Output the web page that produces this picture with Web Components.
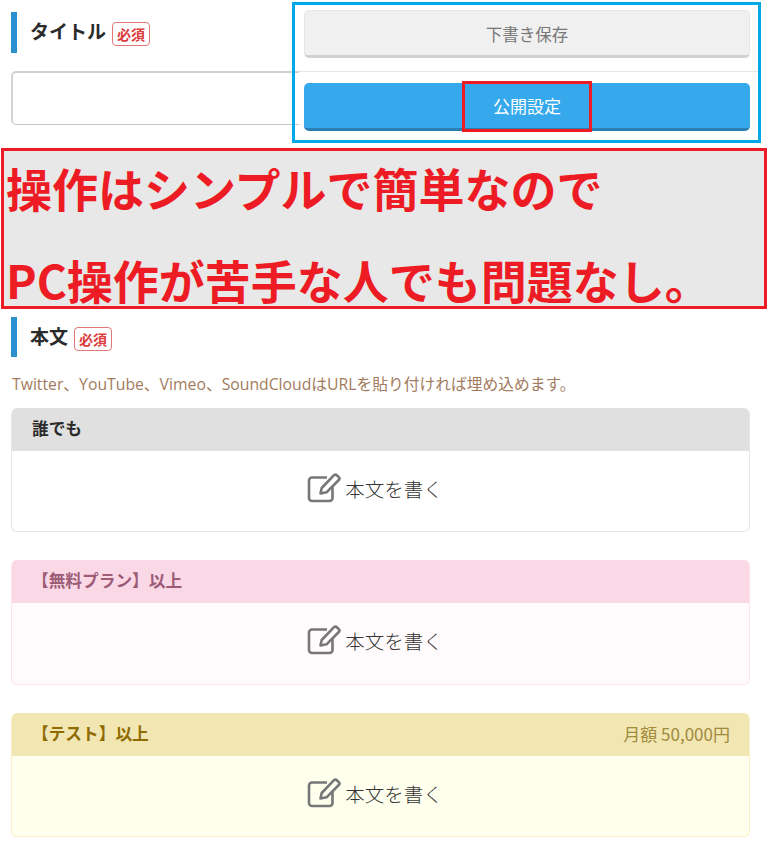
<!DOCTYPE html>
<html lang="ja">
<head>
<meta charset="utf-8">
<title>投稿</title>
<style>
  html, body { margin: 0; background: #fff; }
  body { font-family: "Noto Sans CJK JP", "Noto Sans", sans-serif; color: #333; }
</style>
</head>
<body>
<post-editor>
  <field-heading slot="title-heading" style="--top:12px;--h:41px">タイトル</field-heading>
  <field-heading slot="body-heading" style="--top:8px">本文</field-heading>
  <callout-banner slot="banner">
    <span>操作はシンプルで簡単なので</span>
    <span>PC操作が苦手な人でも問題なし。</span>
  </callout-banner>
  <plan-card slot="cards" tone="plain" label="誰でも"></plan-card>
  <plan-card slot="cards" tone="pink" label="【無料プラン】以上" style="--card-h:125px"></plan-card>
  <plan-card slot="cards" tone="gold" label="【テスト】以上" price="月額 50,000円"></plan-card>
</post-editor>

<script>
(() => {
  "use strict";

  const FONT = `"Noto Sans CJK JP", "Noto Sans", sans-serif`;

  class PostEditor extends HTMLElement {
    connectedCallback() {
      if (this.shadowRoot) return;
      const shadow = this.attachShadow({ mode: "open" });
      shadow.innerHTML = `
        <style>
          :host { display: block; position: relative; width: 768px; height: 850px; overflow: hidden; }
          .input {
            height: 54px;
            margin: 18px 18px 0 11px;
            box-sizing: border-box;
            border: 1px solid #c4c4c4;
            border-top: 2px solid #cfcfcf;
            border-left: 2px solid #d4d4d4;
            border-radius: 5px;
            background: #fff;
          }
          .banner { display: block; margin: 23px 1px 0; }
          .note {
            margin: 17px 0 14px 12px;
            font: 15.75px/20px "Open Sans", ${FONT};
            color: #a27c5e;
            white-space: nowrap;
          }
          .cards { display: flex; flex-direction: column; gap: 28px; margin: 0 18px 0 11px; }
        </style>
        <slot name="title-heading"></slot>
        <div class="input"></div>
        <div class="banner"><slot name="banner"></slot></div>
        <slot name="body-heading"></slot>
        <p class="note">Twitter、YouTube、Vimeo、SoundCloudはURLを貼り付ければ埋め込めます。</p>
        <div class="cards"><slot name="cards"></slot></div>
        <action-panel></action-panel>`;
    }
  }

  class FieldHeading extends HTMLElement {
    connectedCallback() {
      if (this.shadowRoot) return;
      const shadow = this.attachShadow({ mode: "open" });
      shadow.innerHTML = `
        <style>
          :host {
            display: flex;
            align-items: center;
            box-sizing: border-box;
            height: var(--h, 40px);
            margin: var(--top, 0) 0 0 11px;
            padding: 0 0 4px 13px;
            border-left: 6px solid #2a90cf;
            font: bold 19px/1 ${FONT};
            color: #2b2b2b;
          }
          .badge {
            display: inline-flex;
            align-items: center;
            justify-content: center;
            box-sizing: border-box;
            width: 38px;
            height: 24px;
            margin: 7px 0 0 6px;
            border: 1px solid #e27878;
            border-radius: 4px;
            font-size: 14px;
            font-weight: bold;
            color: #dc3c3c;
          }
        </style>
        <slot></slot><span class="badge">必須</span>`;
    }
  }

  class ActionPanel extends HTMLElement {
    connectedCallback() {
      if (this.shadowRoot) return;
      const shadow = this.attachShadow({ mode: "open" });
      shadow.innerHTML = `
        <style>
          :host {
            position: absolute;
            left: 292px;
            top: 2px;
            width: 469px;
            height: 141px;
            box-sizing: border-box;
            border: 3px solid #00a8e8;
            font: 16.5px/1 ${FONT};
          }
          .inner {
            box-sizing: border-box;
            height: 100%;
            margin-left: 4px;
            padding: 5px 8px 0 5px;
            background: #fff;
          }
          .btn {
            display: flex;
            align-items: center;
            justify-content: center;
            box-sizing: border-box;
            height: 48px;
            border-radius: 5px;
          }
          .draft { padding-top: 2px; background: #f0f0f0; border: 1px solid #e6e6e6; border-bottom: 3px solid #d2d2d2; color: #777; }
          .publish { position: relative; background: #36a8ec; border-bottom: 3px solid #2b7fb5; color: #fff; font-size: 17px; }
          hr { height: 1px; margin: 13px -8px 11px -5px; border: 0; background: #e6e6e6; }
          .mark {
            position: absolute;
            left: 158px;
            top: -2px;
            width: 130px;
            height: 51px;
            box-sizing: border-box;
            border: 3px solid #ed1c24;
          }
        </style>
        <div class="inner">
          <div class="btn draft">下書き保存</div>
          <hr>
          <div class="btn publish">公開設定<span class="mark"></span></div>
        </div>`;
    }
  }

  class CalloutBanner extends HTMLElement {
    connectedCallback() {
      if (this.shadowRoot) return;
      const shadow = this.attachShadow({ mode: "open" });
      shadow.innerHTML = `
        <style>
          :host {
            display: flex;
            flex-direction: column;
            gap: 46px;
            box-sizing: border-box;
            height: 161px;
            padding: 13px 0 0 2px;
            border: 3px solid #ed1c24;
            background: #e8e8e8;
            color: #ed1c24;
            font: bold 46px/46px ${FONT};
            white-space: nowrap;
          }
          ::slotted(span) { display: block; }
        </style>
        <slot></slot>`;
    }
  }

  const TONES = {
    plain: { border: "#e6e6e6", head: "#e0e0e0", body: "#fff", label: "#2b2b2b", price: "#777" },
    pink: { border: "#fce3ed", head: "#fbd8e6", body: "#fffbfd", label: "#9c5b76", price: "#9c5b76" },
    gold: { border: "#f8f0c8", head: "#f2e6b3", body: "#ffffee", label: "#8f6b00", price: "#a08a3c" },
  };

  class PlanCard extends HTMLElement {
    connectedCallback() {
      if (this.shadowRoot) return;
      const tone = TONES[this.getAttribute("tone")] || TONES.plain;
      const price = this.getAttribute("price");
      const shadow = this.attachShadow({ mode: "open" });
      shadow.innerHTML = `
        <style>
          :host {
            display: flex;
            flex-direction: column;
            box-sizing: border-box;
            height: var(--card-h, 124px);
            border: 1px solid ${tone.border};
            border-top: 0;
            border-radius: 6px;
            overflow: hidden;
            background: ${tone.body};
            font-family: ${FONT};
          }
          .head {
            display: flex;
            align-items: center;
            justify-content: space-between;
            flex: none;
            box-sizing: border-box;
            height: 43px;
            padding: 0 19px 3px 20px;
            background: ${tone.head};
          }
          .label { font-size: 16.7px; font-weight: bold; color: ${tone.label}; }
          .price { font-size: 17px; color: ${tone.price}; }
          .write {
            display: flex;
            justify-content: center;
            align-items: center;
            gap: 4px;
            box-sizing: border-box;
            height: 76px;
            padding: 0 11px 2px 0;
            font-size: 19.5px;
            font-weight: 300;
            color: #333;
          }
          .write svg { width: 34px; height: 32px; flex: none; }
        </style>
        <div class="head">
          <span class="label">${this.getAttribute("label")}</span>
          ${price ? `<span class="price">${price}</span>` : ""}
        </div>
        <div class="write">
          <svg viewBox="0 0 34 32" fill="none" stroke="#777" stroke-width="2.6" stroke-linejoin="round" aria-hidden="true">
            <path d="M20 5.5H5a3 3 0 0 0-3 3V26a3 3 0 0 0 3 3h17.5a3 3 0 0 0 3-3V15"/>
            <path d="M13.5 21.5l1.2-5.5L27 3.2a2 2 0 0 1 2.8 0l2 2a2 2 0 0 1 0 2.8L19.5 20.3z"/>
          </svg>
          <span>本文を書く</span>
        </div>`;
    }
  }

  customElements.define("post-editor", PostEditor);
  customElements.define("field-heading", FieldHeading);
  customElements.define("action-panel", ActionPanel);
  customElements.define("callout-banner", CalloutBanner);
  customElements.define("plan-card", PlanCard);
})();
</script>
</body>
</html>
